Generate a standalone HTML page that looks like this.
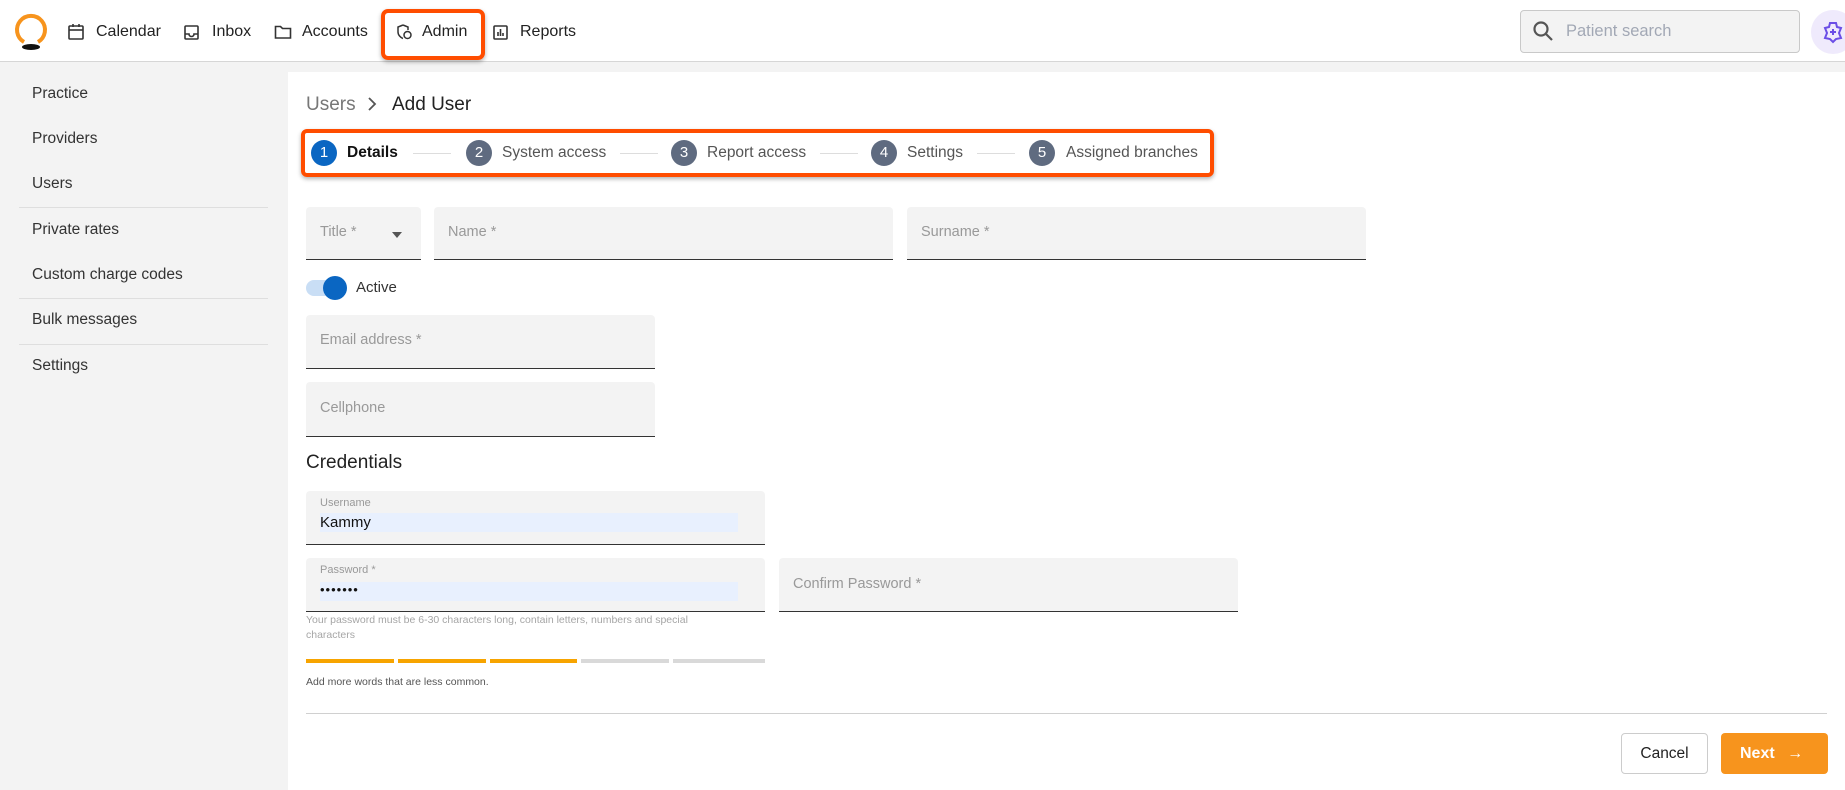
<!DOCTYPE html>
<html><head><meta charset="utf-8"><style>
*{box-sizing:border-box;margin:0;padding:0}
body{width:1845px;height:790px;position:relative;overflow:hidden;background:#f3f3f3;font-family:"Liberation Sans",sans-serif;color:#222}
.a{position:absolute}
.hdr{left:0;top:0;width:1845px;height:62px;background:#fff;border-bottom:1px solid #d6d6d6}
.nav{top:23px;font-size:16px;color:#222}
.side{left:32px;font-size:15.5px;color:#333}
.div{left:19px;width:249px;height:1px;background:#dedede}
.panel{left:288px;top:72px;width:1557px;height:718px;background:#fff}
.fld{background:#f3f3f3;border-bottom:1.5px solid #333;border-radius:4px 4px 0 0}
.ph{font-size:14.5px;color:#999;position:absolute;left:14px}
.circ{width:26px;height:26px;border-radius:50%;background:#5f6b80;color:#fff;font-size:15px;text-align:center;line-height:26px;top:140px}
.st{top:144px;font-size:15.5px;color:#555}
.ln{top:153px;height:1px;background:#ddd;width:38px}
.bar{top:659px;height:4px}
</style></head><body>
<div class="a hdr"></div>
<svg class="a" style="left:13px;top:12px" width="38" height="40" viewBox="0 0 38 40"><path d="M11 30A14 14 0 1 1 25 30" fill="none" stroke="#f7941d" stroke-width="4"/><ellipse cx="18" cy="35" rx="9" ry="3" fill="#111"/></svg>
<svg class="a" style="left:67px;top:23px" width="18" height="18" viewBox="0 0 18 18" fill="none" stroke="#333" stroke-width="1.6"><rect x="2" y="3" width="14" height="13" rx="1"/><line x1="2" y1="7" x2="16" y2="7"/><line x1="6" y1="1" x2="6" y2="4"/><line x1="12" y1="1" x2="12" y2="4"/></svg>
<div class="a nav" style="left:96px">Calendar</div>
<svg class="a" style="left:183px;top:24px" width="17" height="17" viewBox="0 0 17 17" fill="none" stroke="#333" stroke-width="1.6"><rect x="2" y="2" width="13" height="13" rx="1"/><path d="M2 10h4a2.5 2.5 0 0 0 5 0h4"/></svg>
<div class="a nav" style="left:212px">Inbox</div>
<svg class="a" style="left:274px;top:24px" width="18" height="16" viewBox="0 0 18 16" fill="none" stroke="#333" stroke-width="1.6"><path d="M1.5 2.5h5l2 2h8v9.5h-15z"/></svg>
<div class="a nav" style="left:302px">Accounts</div>
<div class="a" style="left:381px;top:9px;width:104px;height:51px;border:4px solid #ff4d00;border-radius:7px;box-shadow:0 2px 4px rgba(0,0,0,.3)"></div>
<svg class="a" style="left:395px;top:23px" width="18" height="18" viewBox="0 0 18 18" fill="none" stroke="#333" stroke-width="1.5"><path d="M8 2l5 2v3M8 2L3 4v5c0 3 2.5 5.5 5 6.5"/><circle cx="12.5" cy="12" r="3.5"/></svg>
<div class="a nav" style="left:422px">Admin</div>
<svg class="a" style="left:492px;top:24px" width="17" height="17" viewBox="0 0 17 17" fill="none" stroke="#333" stroke-width="1.6"><rect x="2" y="2" width="13" height="13" rx="1"/><path d="M6 12V8M8.5 12V5M11 12V9"/></svg>
<div class="a nav" style="left:520px">Reports</div>
<div class="a" style="left:1520px;top:10px;width:280px;height:43px;background:#f3f3f3;border:1px solid #c9c9c9;border-radius:4px"></div>
<svg class="a" style="left:1532px;top:20px" width="22" height="22" viewBox="0 0 22 22" fill="none" stroke="#555" stroke-width="2.2"><circle cx="9" cy="9" r="6.5"/><line x1="14" y1="14" x2="20" y2="20"/></svg>
<div class="a" style="left:1566px;top:22px;font-size:16.5px;color:#a2a8b5">Patient search</div>
<div class="a" style="left:1811px;top:10px;width:44px;height:44px;border-radius:50%;background:#efeafc"></div>
<svg class="a" style="left:1821px;top:20px" width="24" height="24" viewBox="0 0 24 24" fill="none" stroke="#6b4ee6" stroke-width="2"><path d="M9 3h6l1 4 4 1-2 5 2 5-5 1-3 3-3-3-5-1 2-5-2-5 4-1z"/><path d="M12 9v6M9 12h6"/></svg>

<div class="a side" style="top:85px">Practice</div>
<div class="a side" style="top:130px">Providers</div>
<div class="a side" style="top:175px">Users</div>
<div class="a div" style="top:207px"></div>
<div class="a side" style="top:221px">Private rates</div>
<div class="a side" style="top:266px">Custom charge codes</div>
<div class="a div" style="top:298px"></div>
<div class="a side" style="top:311px">Bulk messages</div>
<div class="a div" style="top:344px"></div>
<div class="a side" style="top:357px">Settings</div>

<div class="a panel"></div>
<div class="a" style="left:306px;top:94px;font-size:19px;color:#777">Users</div>
<svg class="a" style="left:366px;top:96px" width="12" height="16" viewBox="0 0 12 16" fill="none" stroke="#555" stroke-width="1.8"><path d="M3 2l6 6-6 6"/></svg>
<div class="a" style="left:392px;top:94px;font-size:19px;color:#222">Add User</div>

<div class="a" style="left:301px;top:129px;width:913px;height:48px;border:4px solid #ff4d00;border-radius:6px;box-shadow:0 2px 4px rgba(0,0,0,.3)"></div>
<div class="a circ" style="left:311px;background:#0a66c2">1</div>
<div class="a st" style="left:347px;color:#111;font-weight:bold">Details</div>
<div class="a ln" style="left:413px"></div>
<div class="a circ" style="left:466px">2</div>
<div class="a st" style="left:502px">System access</div>
<div class="a ln" style="left:620px"></div>
<div class="a circ" style="left:671px">3</div>
<div class="a st" style="left:707px">Report access</div>
<div class="a ln" style="left:820px"></div>
<div class="a circ" style="left:871px">4</div>
<div class="a st" style="left:907px">Settings</div>
<div class="a ln" style="left:977px"></div>
<div class="a circ" style="left:1029px">5</div>
<div class="a st" style="left:1066px">Assigned branches</div>

<div class="a fld" style="left:306px;top:207px;width:115px;height:53px"><span class="ph" style="top:17px">Title *</span><span style="position:absolute;left:86px;top:25px;border:5px solid transparent;border-top:6px solid #555"></span></div>
<div class="a fld" style="left:434px;top:207px;width:459px;height:53px"><span class="ph" style="top:17px">Name *</span></div>
<div class="a fld" style="left:907px;top:207px;width:459px;height:53px"><span class="ph" style="top:17px">Surname *</span></div>

<div class="a" style="left:306px;top:280px;width:38px;height:16px;border-radius:8px;background:#c9def5"></div>
<div class="a" style="left:323px;top:276px;width:24px;height:24px;border-radius:50%;background:#0a66c2"></div>
<div class="a" style="left:356px;top:279px;font-size:15px;color:#333">Active</div>

<div class="a fld" style="left:306px;top:315px;width:349px;height:54px"><span class="ph" style="top:17px">Email address *</span></div>
<div class="a fld" style="left:306px;top:382px;width:349px;height:55px"><span class="ph" style="top:18px">Cellphone</span></div>

<div class="a" style="left:306px;top:452px;font-size:19px;color:#222">Credentials</div>

<div class="a fld" style="left:306px;top:491px;width:459px;height:54px"><span class="ph" style="top:6px;font-size:11px">Username</span><div style="position:absolute;left:14px;top:22px;width:418px;height:19px;background:#e8f0fe;font-size:15px;color:#111;padding-top:1px">Kammy</div></div>
<div class="a fld" style="left:306px;top:558px;width:459px;height:54px"><span class="ph" style="top:6px;font-size:11px">Password *</span><div style="position:absolute;left:14px;top:24px;width:418px;height:19px;background:#e8f0fe;font-size:13px;color:#111;letter-spacing:1px">•••••••</div></div>
<div class="a fld" style="left:779px;top:558px;width:459px;height:54px"><span class="ph" style="top:18px">Confirm Password *</span></div>
<div class="a" style="left:306px;top:613px;width:420px;font-size:10.5px;line-height:15px;color:#a6a6a6">Your password must be 6-30 characters long, contain letters, numbers and special characters</div>
<div class="a bar" style="left:306px;width:88px;background:#f7a400"></div>
<div class="a bar" style="left:398px;width:88px;background:#f7a400"></div>
<div class="a bar" style="left:490px;width:87px;background:#f7a400"></div>
<div class="a bar" style="left:581px;width:88px;background:#d9d9d9"></div>
<div class="a bar" style="left:673px;width:92px;background:#d9d9d9"></div>
<div class="a" style="left:306px;top:676px;font-size:10.5px;color:#555">Add more words that are less common.</div>

<div class="a" style="left:306px;top:713px;width:1521px;height:1px;background:#d0d0d0"></div>
<div class="a" style="left:1621px;top:733px;width:87px;height:41px;border:1px solid #ccc;border-radius:4px;font-size:15.5px;text-align:center;line-height:39px;color:#222">Cancel</div>
<div class="a" style="left:1721px;top:733px;width:107px;height:41px;background:#f7941d;border-radius:4px;font-size:16px;font-weight:bold;color:#fff;line-height:41px;padding-left:19px">Next <span style="font-weight:normal;margin-left:8px">→</span></div>
</body></html>
